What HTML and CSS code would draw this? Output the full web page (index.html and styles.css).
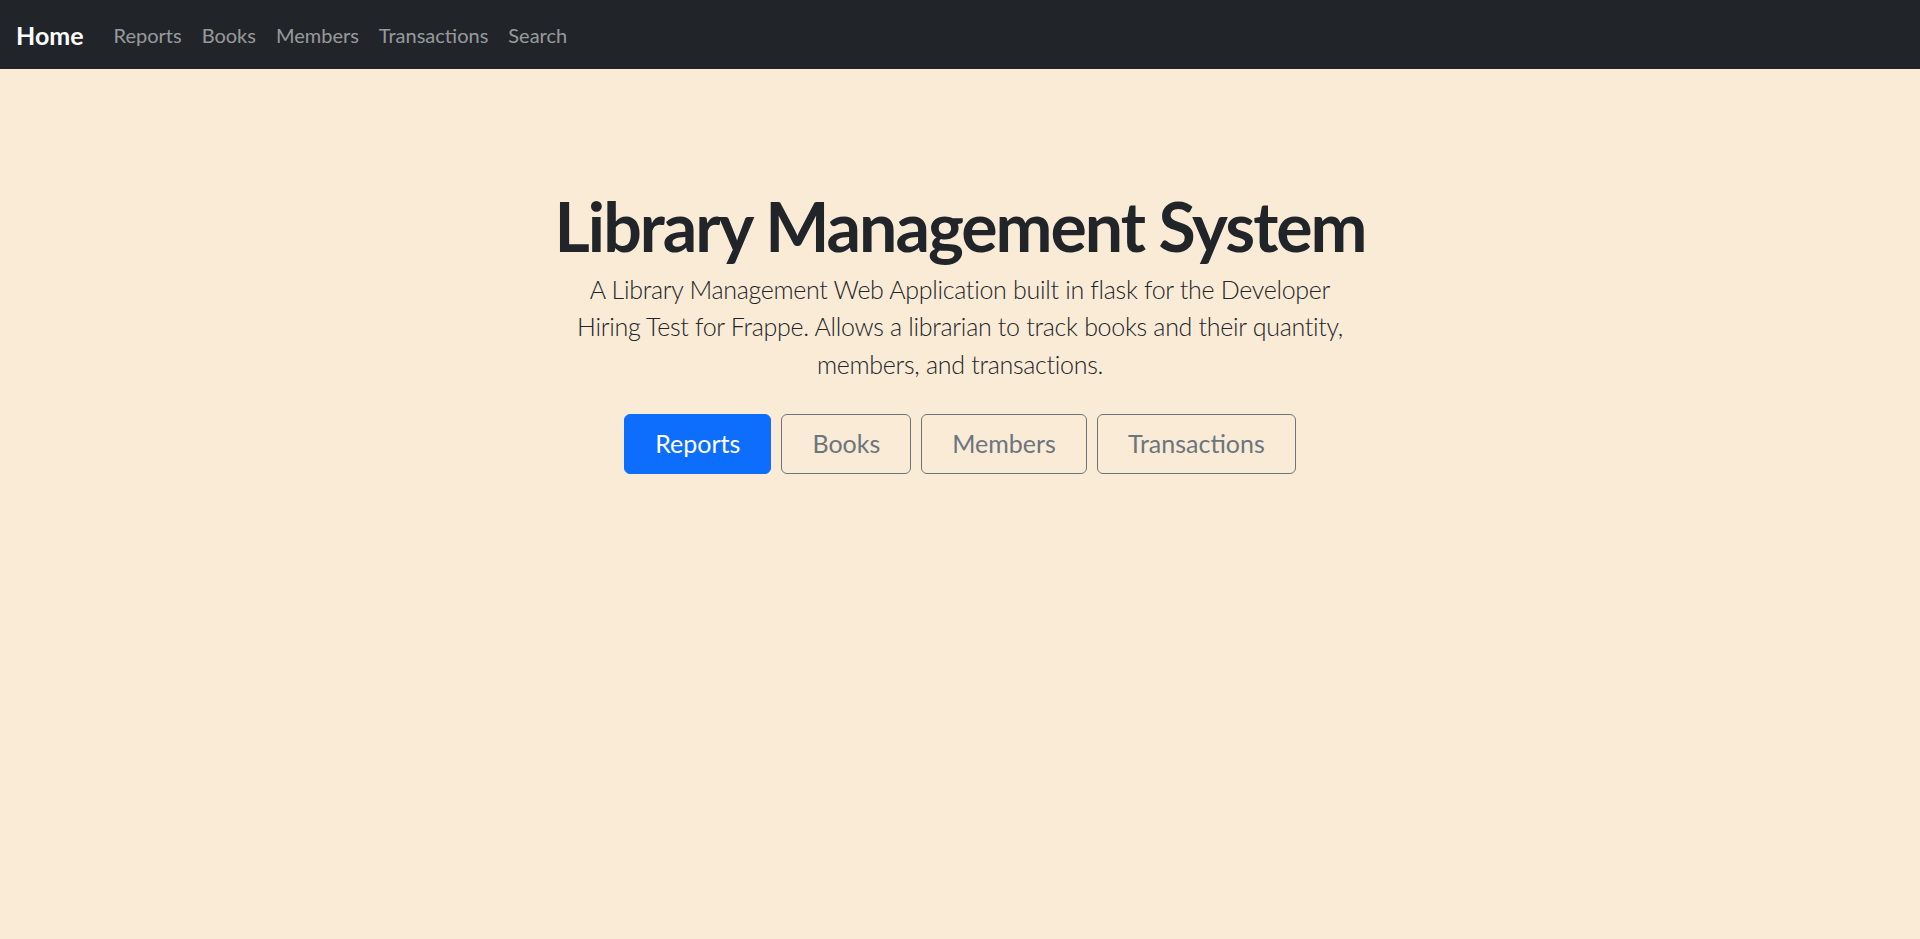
FILE: index.html
```html
<!DOCTYPE html>
<html lang="en">
<head>
    <meta charset="UTF-8">
    <meta name="viewport" content="width=device-width, initial-scale=1.0">
    <title>Library Management System</title>
    <link rel="stylesheet" href="styles.css">
</head>
<body>
    <nav class="navbar">
        <a class="brand" href="#">Home</a>
        <ul class="nav-links">
            <li><a href="#">Reports</a></li>
            <li><a href="#">Books</a></li>
            <li><a href="#">Members</a></li>
            <li><a href="#">Transactions</a></li>
            <li><a href="#">Search</a></li>
        </ul>
    </nav>

    <section class="hero">
        <h1>Library Management System</h1>
        <div class="hero-body">
            <p class="lead">A Library Management Web Application built in flask for the Developer Hiring Test for Frappe. Allows a librarian to track books and their quantity, members, and transactions.</p>
            <div class="actions">
                <a class="btn btn-primary" href="#">Reports</a>
                <a class="btn btn-outline" href="#">Books</a>
                <a class="btn btn-outline" href="#">Members</a>
                <a class="btn btn-outline" href="#">Transactions</a>
            </div>
        </div>
    </section>
</body>
</html>
```

FILE: styles.css
```css
* {
    margin: 0;
    padding: 0;
    box-sizing: border-box;
}

body {
    background: #faebd7;
    font-family: 'Lato', 'Open Sans', sans-serif;
    color: #212529;
    min-height: 100vh;
}

a {
    text-decoration: none;
}

/* top bar */
.navbar {
    background: #212529;
    height: 69px;
    display: flex;
    align-items: center;
    padding: 0 16px;
}

.brand {
    color: #fff;
    font-size: 25px;
    font-weight: 700;
    margin-right: 20px;
}

.nav-links {
    list-style: none;
    display: flex;
}

.nav-links a {
    display: block;
    padding: 10px;
    color: rgba(255, 255, 255, 0.55);
    font-size: 20px;
}

.nav-links a:hover {
    color: rgba(255, 255, 255, 0.75);
}

/* hero */
.hero {
    text-align: center;
    padding-top: 116px;
}

h1 {
    font-size: 68px;
    font-weight: 700;
    letter-spacing: -2px;
    line-height: 1.2;
    margin-bottom: 4px;
}

.hero-body {
    max-width: 780px;
    margin: 0 auto;
}

.lead {
    font-size: 25px;
    font-weight: 300;
    letter-spacing: -0.3px;
    line-height: 1.5;
    margin-bottom: 31px;
}

.actions {
    display: flex;
    justify-content: center;
    gap: 10px;
}

.btn {
    display: inline-block;
    font-size: 25px;
    line-height: 1.5;
    padding: 10px 30px;
    border: 1px solid transparent;
    border-radius: 6px;
}

.btn-primary {
    background: #0d6efd;
    border-color: #0d6efd;
    color: #fff;
}

.btn-outline {
    border-color: #6c757d;
    color: #6c757d;
}

.btn-outline:hover {
    background: #6c757d;
    color: #fff;
}
```
